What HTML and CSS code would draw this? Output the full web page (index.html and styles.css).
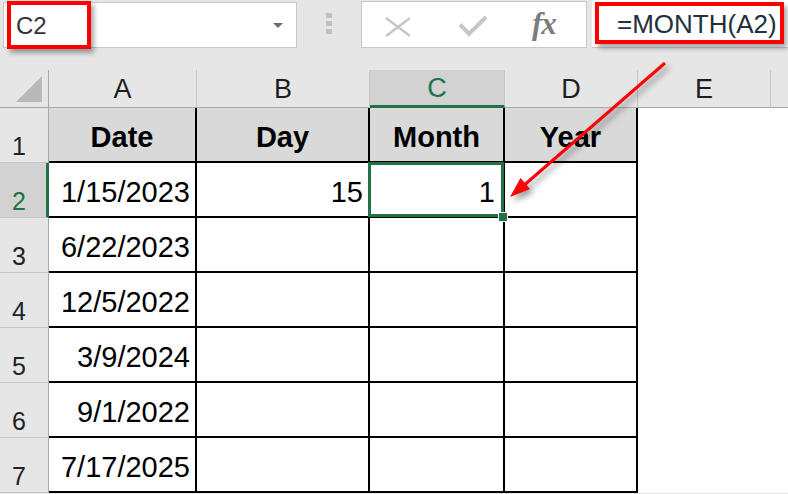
FILE: index.html
```html
<!DOCTYPE html>
<html>
<head>
<meta charset="utf-8">
<link rel="stylesheet" href="styles.css">
</head>
<body>
<div class="page">
  <div class="toolbar">
    <div class="namebox">
      <span class="name-text">C2</span>
      <span class="dropdown"></span>
      <span class="red-mark"></span>
    </div>
    <div class="dots"><i></i><i></i><i></i></div>
    <div class="buttons">
      <svg class="ic-x" width="26" height="20" viewBox="0 0 26 20"><path d="M1 1 L25 19 M25 1 L1 19" stroke="#c6c6c6" stroke-width="2.4" fill="none"/></svg>
      <svg class="ic-check" width="30" height="22" viewBox="0 0 30 22"><path d="M2 9.5 L11 19 L28 2" stroke="#c6c6c6" stroke-width="4" fill="none" stroke-linejoin="miter"/></svg>
      <span class="fx">fx</span>
    </div>
    <div class="formula"><span class="formula-text">=MONTH(A2)</span></div>
  </div>

  <div class="sheet">
    <div class="corner"><svg width="26" height="26" viewBox="0 0 26 26"><polygon points="26,0 26,26 0,26" fill="#b9b9b9"/></svg></div>
    <div class="ch">A</div>
    <div class="ch">B</div>
    <div class="ch ch-sel">C</div>
    <div class="ch">D</div>
    <div class="ch">E</div>
    <div class="ch ch-last"></div>

    <div class="rh">1</div>
    <div class="c hd">Date</div>
    <div class="c hd">Day</div>
    <div class="c hd">Month</div>
    <div class="c hd">Year</div>
    <div class="e"></div>
    <div class="e"></div>

    <div class="rh rh-sel">2</div>
    <div class="c">1/15/2023</div>
    <div class="c">15</div>
    <div class="c sel">1<span class="sel-box"></span><span class="handle"></span></div>
    <div class="c"></div>
    <div class="e"></div>
    <div class="e"></div>

    <div class="rh">3</div>
    <div class="c">6/22/2023</div>
    <div class="c"></div>
    <div class="c"></div>
    <div class="c"></div>
    <div class="e"></div>
    <div class="e"></div>

    <div class="rh">4</div>
    <div class="c">12/5/2022</div>
    <div class="c"></div>
    <div class="c"></div>
    <div class="c"></div>
    <div class="e"></div>
    <div class="e"></div>

    <div class="rh">5</div>
    <div class="c">3/9/2024</div>
    <div class="c"></div>
    <div class="c"></div>
    <div class="c"></div>
    <div class="e"></div>
    <div class="e"></div>

    <div class="rh">6</div>
    <div class="c">9/1/2022</div>
    <div class="c"></div>
    <div class="c"></div>
    <div class="c"></div>
    <div class="e"></div>
    <div class="e"></div>

    <div class="rh">7</div>
    <div class="c">7/17/2025</div>
    <div class="c"></div>
    <div class="c"></div>
    <div class="c"></div>
    <div class="e"></div>
    <div class="e"></div>
  </div>

  <svg class="arrow" width="788" height="494" viewBox="0 0 788 494">
    <line x1="665" y1="63" x2="522" y2="187" stroke="#ff0000" stroke-width="3"/>
    <polygon points="510,197 530,189 520.5,178" fill="#ff0000"/>
  </svg>
</div>
</body>
</html>
```

FILE: styles.css
```css
* { box-sizing: border-box; }
html, body { margin: 0; padding: 0; }
body {
  background: #e6e6e6;
  font-family: "Liberation Sans", Arial, sans-serif;
}
.page {
  position: relative;
  width: 788px;
  height: 494px;
  overflow: hidden;
  background: #e6e6e6;
}

/* toolbar */
.toolbar {
  display: flex;
  align-items: flex-start;
  height: 70px;
}
.namebox {
  position: relative;
  display: flex;
  align-items: center;
  margin: 2px 0 0 3px;
  width: 294px;
  height: 46px;
  background: #fff;
  border: 1px solid #c8c8c8;
  padding-top: 2px;
}
.name-text {
  padding-left: 12px;
  font-size: 24px;
  line-height: 42px;
  color: #333;
}
.dropdown {
  margin-left: auto;
  margin-right: 13px;
  margin-top: -2px;
  width: 0;
  height: 0;
  border-left: 5.5px solid transparent;
  border-right: 5.5px solid transparent;
  border-top: 5px solid #6e6e6e;
}
.red-mark {
  position: absolute;
  left: 3px;
  top: -2px;
  width: 84px;
  height: 48px;
  border: 4px solid #ff0000;
  box-shadow: 3px 4px 5px rgba(0,0,0,0.35);
}
.dots {
  display: flex;
  flex-direction: column;
  gap: 3px;
  margin: 13px 0 0 29px;
}
.dots i {
  display: block;
  width: 6px;
  height: 5px;
  background: #c0c0c0;
}
.buttons {
  display: flex;
  align-items: center;
  margin: 1px 0 0 29px;
  width: 226px;
  height: 47px;
  background: #fff;
  border: 1px solid #c8c8c8;
  padding-left: 23px;
}
.ic-x { margin-top: 5px; }
.ic-check { margin-left: 47px; margin-top: 3px; }
.fx {
  margin-left: 44px;
  margin-top: -2px;
  font-family: "Liberation Serif", "Times New Roman", serif;
  font-style: italic;
  font-weight: bold;
  font-size: 31px;
  color: #7c7c7c;
  letter-spacing: -1px;
}
.formula {
  flex: 1;
  height: 48px;
  margin-left: 5px;
  background: #fff;
  border-bottom: 1px solid #c8c8c8;
  padding: 2px 0 0 3px;
}
.formula-text {
  display: block;
  width: 189px;
  height: 42px;
  border: 4px solid #ff0000;
  box-shadow: 3px 4px 5px rgba(0,0,0,0.35);
  padding: 3px 0 0 18px;
  font-size: 26px;
  line-height: 30px;
  color: #24303c;
  white-space: nowrap;
}

/* sheet */
.sheet {
  display: grid;
  grid-template-columns: 49px 148px 173px 135px 133px 133px 17px;
  grid-template-rows: 38px repeat(7, 55px);
}
.corner {
  display: flex;
  align-items: flex-end;
  justify-content: flex-end;
  padding: 0 6px 5px 0;
  border-right: 1px solid #a8a8a8;
  border-bottom: 1px solid #a8a8a8;
}
.ch {
  display: flex;
  align-items: center;
  justify-content: center;
  background: #e6e6e6;
  border-right: 1px solid #c6c6c6;
  border-bottom: 1px solid #a8a8a8;
  font-size: 27px;
  color: #1e1e1e;
  padding-top: 1px;
}
.ch-last { border-right: none; }
.ch-sel {
  background: #d2d2d2;
  border-bottom: 3px solid #217346;
  color: #217346;
}
.rh {
  display: flex;
  align-items: flex-end;
  padding: 0 0 3px 12px;
  background: #e6e6e6;
  border-right: 1px solid #a8a8a8;
  border-bottom: 1px solid #c6c6c6;
  font-size: 25px;
  line-height: 25px;
  color: #222;
}
.rh-sel {
  background: #d2d2d2;
  border-right: 3px solid #217346;
  color: #217346;
}
.c {
  position: relative;
  display: flex;
  align-items: center;
  justify-content: flex-end;
  background: #fff;
  border-right: 2px solid #000;
  border-bottom: 2px solid #000;
  padding: 5px 5px 0 0;
  font-size: 29px;
  color: #000;
}
.c.hd {
  justify-content: center;
  padding-right: 0;
  background: #d9d9d9;
  font-weight: bold;
}
.c.sel { padding-right: 8px; z-index: 2; }
.sel-box {
  position: absolute;
  left: -2px;
  top: -1px;
  right: -1px;
  bottom: -1px;
  border: 3px solid #217346;
}
.handle {
  position: absolute;
  right: -4px;
  bottom: -5px;
  width: 8px;
  height: 8px;
  background: #217346;
  outline: 1px solid #fff;
}
.e { background: #fff; }

.arrow {
  position: absolute;
  left: 0;
  top: 0;
  z-index: 5;
  pointer-events: none;
  filter: drop-shadow(3px 4px 3px rgba(0,0,0,0.4));
}
```
